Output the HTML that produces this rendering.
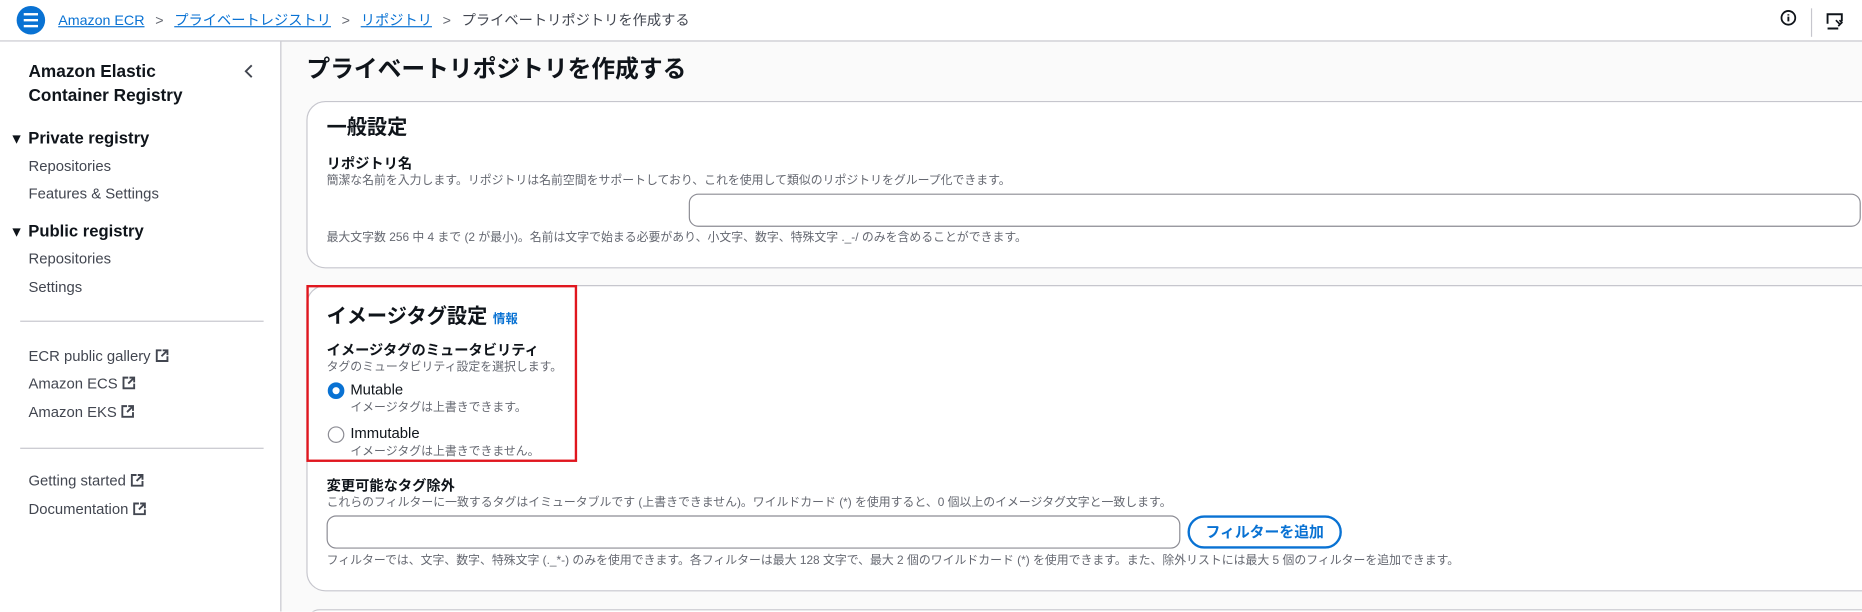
<!DOCTYPE html>
<html><head><meta charset="utf-8"><style>
html,body{margin:0;padding:0;overflow:hidden;background:#fff}
body{width:1862px;height:611px}
#w{position:absolute;left:0;top:0;width:1568px;height:515px;transform:scale(1.1875);transform-origin:0 0;font-family:"Liberation Sans","Noto Sans CJK JP",sans-serif;color:#0f141a;background:#fafafa;overflow:hidden}
.a{position:absolute;white-space:nowrap;line-height:16px}
.top{position:absolute;left:0;top:0;width:1568px;height:34px;background:#fff;border-bottom:1px solid #c6c6cd}
.side{position:absolute;left:0;top:35px;width:236px;height:480px;background:#fff;border-right:1px solid #c6c6cd}
.bcr{position:absolute;left:49px;top:9px;display:flex;align-items:center;font-size:12px;line-height:16px;white-space:nowrap}
.lnk{color:#0972d3;text-decoration:underline}
.sep{color:#656871;margin:0 9px;font-size:12px}
.nav{font-size:12.5px;color:#424650}
.navb{font-size:14px;font-weight:bold}
.hr{position:absolute;left:17px;width:205px;height:1px;background:#c6c6cd}
.card{position:absolute;left:258px;background:#fff;border:1px solid #c6c6cd;border-radius:16px;width:1400px}
.h2{font-size:17px;font-weight:bold;line-height:20px}
.lb{font-size:12px;font-weight:bold}
.ds{font-size:10px;color:#656871}
.inp{position:absolute;border:1px solid #8c8c94;border-radius:8px;background:#fff}
svg.e{vertical-align:-1px;margin-left:4px}
</style></head><body><div id="w">
<div class="top"></div>
<div class="a" style="left:14px;top:5px;width:24px;height:24px;border-radius:50%;background:#0972d3"></div>
<div class="a" style="left:20px;top:11px;width:12px;height:2px;background:#fff;box-shadow:0 5px 0 #fff,0 10px 0 #fff"></div>
<div class="bcr"><span class="lnk">Amazon ECR</span><span class="sep">&gt;</span><span class="lnk">プライベートレジストリ</span><span class="sep">&gt;</span><span class="lnk">リポジトリ</span><span class="sep">&gt;</span><span style="color:#424650">プライベートリポジトリを作成する</span></div>
<svg class="a" style="left:1499px;top:8px" width="14" height="14" viewBox="0 0 14 14"><circle cx="7" cy="7" r="5.8" fill="none" stroke="#0f141a" stroke-width="1.5"/><path d="M7 6v4M7 4v1" stroke="#0f141a" stroke-width="1.6"/></svg>
<div class="a" style="left:1525px;top:7px;width:1px;height:24px;background:#c6c6cd"></div>
<svg class="a" style="left:1537px;top:10px" width="16" height="16" viewBox="0 0 16 16"><path d="M2 10V2h12v6" fill="none" stroke="#0f141a" stroke-width="1.6"/><path d="M2 14h9" stroke="#0f141a" stroke-width="1.6"/><path d="M9 7l3 3M12 7l2 2-3 3" fill="none" stroke="#0f141a" stroke-width="1.4"/></svg>

<div class="side"></div>
<div class="a" style="left:24px;top:51px;font-size:14.5px;font-weight:bold;line-height:20px;white-space:normal;width:170px">Amazon Elastic Container Registry</div>
<svg class="a" style="left:205px;top:54px" width="10" height="12" viewBox="0 0 10 12"><path d="M7 1L2 6l5 5" fill="none" stroke="#424650" stroke-width="1.6"/></svg>
<div class="a navb" style="left:8px;top:108px"><span style="font-size:12px">▼</span> Private registry</div>
<div class="a nav" style="left:24px;top:132px">Repositories</div>
<div class="a nav" style="left:24px;top:155px">Features &amp; Settings</div>
<div class="a navb" style="left:8px;top:186px"><span style="font-size:12px">▼</span> Public registry</div>
<div class="a nav" style="left:24px;top:210px">Repositories</div>
<div class="a nav" style="left:24px;top:234px">Settings</div>
<div class="hr" style="top:270px"></div>
<div class="a nav" style="left:24px;top:292px">ECR public gallery<svg class="e" width="11" height="11" viewBox="0 0 11 11"><path d="M5 1H1v9h9V6M6 1h4v4M10 1L5 6" fill="none" stroke="#424650" stroke-width="1.6"/></svg></div>
<div class="a nav" style="left:24px;top:315px">Amazon ECS<svg class="e" width="11" height="11" viewBox="0 0 11 11"><path d="M5 1H1v9h9V6M6 1h4v4M10 1L5 6" fill="none" stroke="#424650" stroke-width="1.6"/></svg></div>
<div class="a nav" style="left:24px;top:339px">Amazon EKS<svg class="e" width="11" height="11" viewBox="0 0 11 11"><path d="M5 1H1v9h9V6M6 1h4v4M10 1L5 6" fill="none" stroke="#424650" stroke-width="1.6"/></svg></div>
<div class="hr" style="top:377px"></div>
<div class="a nav" style="left:24px;top:397px">Getting started<svg class="e" width="11" height="11" viewBox="0 0 11 11"><path d="M5 1H1v9h9V6M6 1h4v4M10 1L5 6" fill="none" stroke="#424650" stroke-width="1.6"/></svg></div>
<div class="a nav" style="left:24px;top:421px">Documentation<svg class="e" width="11" height="11" viewBox="0 0 11 11"><path d="M5 1H1v9h9V6M6 1h4v4M10 1L5 6" fill="none" stroke="#424650" stroke-width="1.6"/></svg></div>

<div class="a" style="left:258px;top:46px;font-size:20px;font-weight:bold;line-height:26px">プライベートリポジトリを作成する</div>

<div class="card" style="top:85px;height:139px"></div>
<div class="a h2" style="left:275px;top:98px">一般設定</div>
<div class="a lb" style="left:275px;top:130px">リポジトリ名</div>
<div class="a ds" style="left:275px;top:145px">簡潔な名前を入力します。リポジトリは名前空間をサポートしており、これを使用して類似のリポジトリをグループ化できます。</div>
<div class="inp" style="left:580px;top:163px;width:985px;height:26px"></div>
<div class="a ds" style="left:275px;top:193px">最大文字数 256 中 4 まで (2 が最小)。名前は文字で始まる必要があり、小文字、数字、特殊文字 ._-/ のみを含めることができます。</div>

<div class="card" style="top:240px;height:256px"></div>
<div class="a" style="left:258px;top:240px;width:224px;height:145px;border:2px solid #e0161e"></div>
<div class="a h2" style="left:275px;top:257px">イメージタグ設定 <span style="font-size:10.5px;color:#0972d3">情報</span></div>
<div class="a lb" style="left:275px;top:287px">イメージタグのミュータビリティ</div>
<div class="a ds" style="left:275px;top:302px">タグのミュータビリティ設定を選択します。</div>
<div class="a" style="left:276px;top:322px;width:6px;height:6px;border:4px solid #0972d3;border-radius:50%;line-height:0"></div>
<div class="a" style="left:295px;top:320px;font-size:12.5px">Mutable</div>
<div class="a ds" style="left:295px;top:336px">イメージタグは上書きできます。</div>
<div class="a" style="left:276px;top:359px;width:12px;height:12px;border:1px solid #8c8c94;border-radius:50%;line-height:0"></div>
<div class="a" style="left:295px;top:357px;font-size:12.5px">Immutable</div>
<div class="a ds" style="left:295px;top:373px">イメージタグは上書きできません。</div>
<div class="a lb" style="left:275px;top:401px">変更可能なタグ除外</div>
<div class="a ds" style="left:275px;top:416px">これらのフィルターに一致するタグはイミュータブルです (上書きできません)。ワイルドカード (*) を使用すると、0 個以上のイメージタグ文字と一致します。</div>
<div class="inp" style="left:275px;top:434px;width:717px;height:26px"></div>
<div class="a" style="left:1000px;top:434px;width:126px;height:24px;border:2px solid #0972d3;border-radius:14px;color:#0972d3;font-size:12.5px;font-weight:bold;text-align:center;line-height:24px">フィルターを追加</div>
<div class="a ds" style="left:275px;top:465px">フィルターでは、文字、数字、特殊文字 (._*-) のみを使用できます。各フィルターは最大 128 文字で、最大 2 個のワイルドカード (*) を使用できます。また、除外リストには最大 5 個のフィルターを追加できます。</div>
<div class="card" style="top:513px;height:20px"></div>
</div></body></html>
